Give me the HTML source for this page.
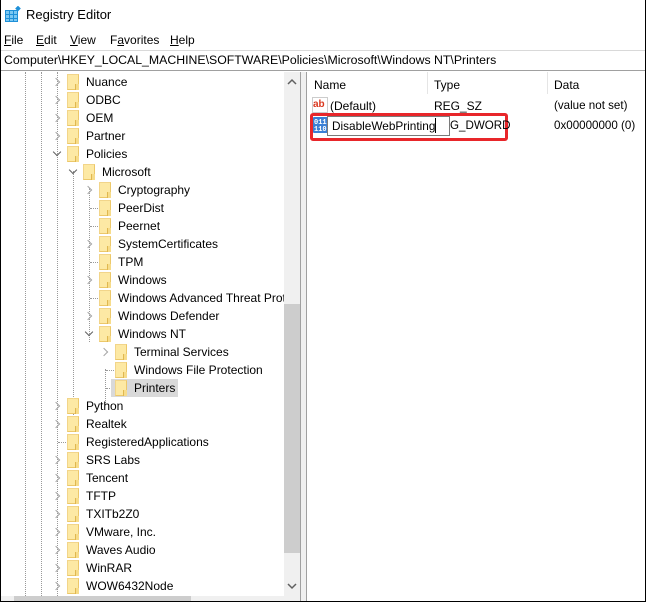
<!DOCTYPE html>
<html><head><meta charset="utf-8"><style>
*{margin:0;padding:0;box-sizing:border-box}
body{width:646px;height:602px;background:#fff;font-family:"Liberation Sans",sans-serif;font-size:12px;color:#000;position:relative;overflow:hidden}
.abs{position:absolute}
.frame{position:absolute;left:0;top:0;width:646px;height:602px;border:1px solid #000;border-top:none;pointer-events:none}
.row{position:absolute;height:18px;line-height:18px;white-space:nowrap}
.fold{position:absolute;width:12px;height:16px;background:#fde9a4;border:1px solid #ecc86a;border-left-color:#f2d58a;border-top-color:#f2d58a}
.fold:after{content:"";position:absolute;right:-1px;bottom:-1px;width:3px;height:6px;border-left:1px solid #e0b850;background:#f7dc8a}
.chev{position:absolute;top:6px;width:6px;height:6px;border-right:1.5px solid #a6a6a6;border-bottom:1.5px solid #a6a6a6;transform:rotate(-45deg);font-size:0}
.chev.dn{top:4px;border-color:#606060;transform:rotate(45deg)}
.dotv{position:absolute;border-left:1px dotted #999;width:0}
.doth{position:absolute;border-top:1px dotted #999;height:0}
.t{position:absolute;top:0}
</style></head><body>
<svg class="abs" style="left:5px;top:6px" width="17" height="17" viewBox="0 0 17 17">
<rect x="0" y="4" width="13" height="12" fill="#1e90d8"/>
<g fill="#7cc8f2"><rect x="1" y="5" width="3" height="3"/><rect x="5" y="5" width="3" height="3"/><rect x="1" y="9" width="3" height="3"/><rect x="5" y="9" width="3" height="3"/><rect x="9" y="9" width="3" height="3"/><rect x="1" y="13" width="3" height="2"/><rect x="5" y="13" width="3" height="2"/><rect x="9" y="13" width="3" height="2"/><rect x="9" y="5" width="3" height="3"/></g>
<rect x="11" y="0.5" width="4" height="4" fill="#1e90d8" transform="rotate(45 13 2.5)"/>
</svg>
<div class="abs" style="left:26px;top:7px;font-size:13px">Registry Editor</div>
<div class="abs" style="left:4px;top:33px;font-size:12px">
<span style="position:absolute;left:0"><u>F</u>ile</span><span style="position:absolute;left:32px"><u>E</u>dit</span><span style="position:absolute;left:66px"><u>V</u>iew</span><span style="position:absolute;left:106px;white-space:nowrap">F<u>a</u>vorites</span><span style="position:absolute;left:166px"><u>H</u>elp</span>
</div>
<div class="abs" style="left:0;top:50px;width:646px;height:21px;border-top:1px solid #d9d9d9;border-bottom:1px solid #a0a0a0"></div>
<div class="abs" style="left:4px;top:53px;font-size:12.3px;white-space:nowrap">Computer\HKEY_LOCAL_MACHINE\SOFTWARE\Policies\Microsoft\Windows NT\Printers</div>

<div class="abs" style="left:0;top:72px;width:284px;height:524px;overflow:hidden">
<div class="dotv" style="left:25px;top:0;height:524px"></div>
<div class="dotv" style="left:41px;top:0;height:524px"></div>
<div class="dotv" style="left:57px;top:0;height:524px"></div>
<div class="dotv" style="left:73px;top:99px;height:246px"></div>
<div class="dotv" style="left:89px;top:116px;height:154px"></div>
<div class="dotv" style="left:105px;top:297px;height:36px"></div>
</div>
<div class="abs" style="left:0;top:0;width:284px;height:596px;overflow:hidden">
<div class="row" style="top:73px;width:284px"><span class="chev" style="left:53px"></span><div class="fold" style="left:67px;top:1px"></div><span class="t" style="left:86px">Nuance</span></div>
<div class="row" style="top:91px;width:284px"><span class="chev" style="left:53px"></span><div class="fold" style="left:67px;top:1px"></div><span class="t" style="left:86px">ODBC</span></div>
<div class="row" style="top:109px;width:284px"><span class="chev" style="left:53px"></span><div class="fold" style="left:67px;top:1px"></div><span class="t" style="left:86px">OEM</span></div>
<div class="row" style="top:127px;width:284px"><span class="chev" style="left:53px"></span><div class="fold" style="left:67px;top:1px"></div><span class="t" style="left:86px">Partner</span></div>
<div class="row" style="top:145px;width:284px"><span class="chev dn" style="left:54px"></span><div class="fold" style="left:67px;top:1px"></div><span class="t" style="left:86px">Policies</span></div>
<div class="row" style="top:163px;width:284px"><span class="chev dn" style="left:70px"></span><div class="fold" style="left:83px;top:1px"></div><span class="t" style="left:102px">Microsoft</span></div>
<div class="row" style="top:181px;width:284px"><span class="chev" style="left:85px"></span><div class="fold" style="left:99px;top:1px"></div><span class="t" style="left:118px">Cryptography</span></div>
<div class="row" style="top:199px;width:284px"><div class="doth" style="left:90px;top:9px;width:8px"></div><div class="fold" style="left:99px;top:1px"></div><span class="t" style="left:118px">PeerDist</span></div>
<div class="row" style="top:217px;width:284px"><div class="doth" style="left:90px;top:9px;width:8px"></div><div class="fold" style="left:99px;top:1px"></div><span class="t" style="left:118px">Peernet</span></div>
<div class="row" style="top:235px;width:284px"><span class="chev" style="left:85px"></span><div class="fold" style="left:99px;top:1px"></div><span class="t" style="left:118px">SystemCertificates</span></div>
<div class="row" style="top:253px;width:284px"><div class="doth" style="left:90px;top:9px;width:8px"></div><div class="fold" style="left:99px;top:1px"></div><span class="t" style="left:118px">TPM</span></div>
<div class="row" style="top:271px;width:284px"><span class="chev" style="left:85px"></span><div class="fold" style="left:99px;top:1px"></div><span class="t" style="left:118px">Windows</span></div>
<div class="row" style="top:289px;width:284px"><div class="doth" style="left:90px;top:9px;width:8px"></div><div class="fold" style="left:99px;top:1px"></div><span class="t" style="left:118px">Windows Advanced Threat Protection</span></div>
<div class="row" style="top:307px;width:284px"><span class="chev" style="left:85px"></span><div class="fold" style="left:99px;top:1px"></div><span class="t" style="left:118px">Windows Defender</span></div>
<div class="row" style="top:325px;width:284px"><span class="chev dn" style="left:86px"></span><div class="fold" style="left:99px;top:1px"></div><span class="t" style="left:118px">Windows NT</span></div>
<div class="row" style="top:343px;width:284px"><span class="chev" style="left:101px"></span><div class="fold" style="left:115px;top:1px"></div><span class="t" style="left:134px">Terminal Services</span></div>
<div class="row" style="top:361px;width:284px"><div class="doth" style="left:106px;top:9px;width:8px"></div><div class="fold" style="left:115px;top:1px"></div><span class="t" style="left:134px">Windows File Protection</span></div>
<div class="row" style="top:379px;width:284px"><div class="doth" style="left:106px;top:9px;width:6px"></div><div class="abs" style="left:111px;top:0;width:67px;height:18px;background:#d9d9d9"></div><div class="fold" style="left:115px;top:1px"></div><span class="t" style="left:134px">Printers</span></div>
<div class="row" style="top:397px;width:284px"><span class="chev" style="left:53px"></span><div class="fold" style="left:67px;top:1px"></div><span class="t" style="left:86px">Python</span></div>
<div class="row" style="top:415px;width:284px"><span class="chev" style="left:53px"></span><div class="fold" style="left:67px;top:1px"></div><span class="t" style="left:86px">Realtek</span></div>
<div class="row" style="top:433px;width:284px"><div class="doth" style="left:58px;top:9px;width:8px"></div><div class="fold" style="left:67px;top:1px"></div><span class="t" style="left:86px">RegisteredApplications</span></div>
<div class="row" style="top:451px;width:284px"><span class="chev" style="left:53px"></span><div class="fold" style="left:67px;top:1px"></div><span class="t" style="left:86px">SRS Labs</span></div>
<div class="row" style="top:469px;width:284px"><span class="chev" style="left:53px"></span><div class="fold" style="left:67px;top:1px"></div><span class="t" style="left:86px">Tencent</span></div>
<div class="row" style="top:487px;width:284px"><span class="chev" style="left:53px"></span><div class="fold" style="left:67px;top:1px"></div><span class="t" style="left:86px">TFTP</span></div>
<div class="row" style="top:505px;width:284px"><span class="chev" style="left:53px"></span><div class="fold" style="left:67px;top:1px"></div><span class="t" style="left:86px">TXITb2Z0</span></div>
<div class="row" style="top:523px;width:284px"><span class="chev" style="left:53px"></span><div class="fold" style="left:67px;top:1px"></div><span class="t" style="left:86px">VMware, Inc.</span></div>
<div class="row" style="top:541px;width:284px"><span class="chev" style="left:53px"></span><div class="fold" style="left:67px;top:1px"></div><span class="t" style="left:86px">Waves Audio</span></div>
<div class="row" style="top:559px;width:284px"><span class="chev" style="left:53px"></span><div class="fold" style="left:67px;top:1px"></div><span class="t" style="left:86px">WinRAR</span></div>
<div class="row" style="top:577px;width:284px"><span class="chev" style="left:53px"></span><div class="fold" style="left:67px;top:1px"></div><span class="t" style="left:86px">WOW6432Node</span></div>
</div>
<div class="abs" style="left:284px;top:72px;width:16px;height:524px;background:#f0f0f0"></div>
<div class="abs" style="left:284px;top:304px;width:16px;height:249px;background:#cdcdcd"></div>
<svg class="abs" style="left:287px;top:78px" width="10" height="8"><path d="M1 6 L5 2 L9 6" stroke="#606060" stroke-width="1.5" fill="none"/></svg>
<svg class="abs" style="left:287px;top:582px" width="10" height="8"><path d="M1 2 L5 6 L9 2" stroke="#606060" stroke-width="1.5" fill="none"/></svg>
<div class="abs" style="left:0;top:596px;width:300px;height:5px;background:#f0f0f0"></div>
<div class="abs" style="left:14px;top:596px;width:177px;height:5px;background:#cdcdcd"></div>
<div class="abs" style="left:300px;top:72px;width:7px;height:530px;background:#f0f0f0;border-left:1px solid #a0a0a0;border-right:1px solid #a0a0a0"></div>

<div class="abs" style="left:427px;top:72px;width:1px;height:22px;background:#e5e5e5"></div>
<div class="abs" style="left:547px;top:72px;width:1px;height:22px;background:#e5e5e5"></div>
<div class="abs" style="left:314px;top:78px">Name</div>
<div class="abs" style="left:434px;top:78px">Type</div>
<div class="abs" style="left:554px;top:78px">Data</div>
<svg class="abs" style="left:312px;top:97px" width="16" height="16"><rect x="0.5" y="0.5" width="15" height="15" fill="#fff" stroke="#ccc"/><text x="1" y="10" font-family="Liberation Sans" font-size="10" font-weight="bold" fill="#d9371e">ab</text></svg>
<div class="abs" style="left:330px;top:99px">(Default)</div>
<div class="abs" style="left:434px;top:99px">REG_SZ</div>
<div class="abs" style="left:554px;top:99px;font-size:11.6px">(value not set)</div>
<div class="abs" style="left:310px;top:113px;width:198px;height:28px;border:3px solid #e8262a;border-radius:3px"></div>
<svg class="abs" style="left:313px;top:117px" width="15" height="16"><rect x="0" y="0" width="15" height="16" rx="1" fill="#3a7fd5"/><g fill="#fff" font-family="Liberation Mono" font-size="7" font-weight="bold"><text x="1" y="7">011</text><text x="1" y="14">110</text></g></svg>
<div class="abs" style="left:327px;top:116px;width:123px;height:20px;border:1px solid #7a7a7a;background:#fff"></div>
<div class="abs" style="left:332px;top:119px;font-size:11.8px">DisableWebPrinting</div>
<div class="abs" style="left:435px;top:118px;width:1px;height:15px;background:#000"></div>
<div class="abs" style="left:450px;top:119px;font-size:11.6px">G_DWORD</div>
<div class="abs" style="left:554px;top:119px;font-size:11.6px">0x00000000 (0)</div>
<div class="frame"></div>
</body></html>
